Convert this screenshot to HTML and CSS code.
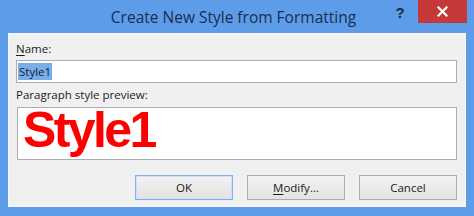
FILE: index.html
```html
<!DOCTYPE html>
<html lang="en">
<head>
    <meta charset="UTF-8">
    <title>Create New Style from Formatting</title>
    <link rel="stylesheet" href="styles.css">
</head>
<body>
    <div class="window">
        <!-- Title bar -->
        <div class="titlebar">
            <div></div>
            <div class="title">Create New Style from Formatting</div>
            <div class="controls">
                <span class="help-btn">?</span>
                <span class="close-btn">
                    <svg width="11" height="11" viewBox="0 0 11 11">
                        <path d="M1.5 1.5 L9.5 9.5 M9.5 1.5 L1.5 9.5" stroke="#fff" stroke-width="2.2" stroke-linecap="square"/>
                    </svg>
                </span>
            </div>
        </div>

        <!-- Dialog body -->
        <div class="panel">
            <label class="field-label" for="styleName"><u>N</u>ame:</label>
            <div class="text-input" id="styleName"><span class="selected">Style1</span></div>

            <div class="field-label preview-label">Paragraph style preview:</div>
            <div class="preview-box">
                <span class="preview-text">Style1</span>
            </div>

            <div class="button-row">
                <button class="btn btn-default">OK</button>
                <button class="btn"><u>M</u>odify...</button>
                <button class="btn">Cancel</button>
            </div>
        </div>
    </div>
</body>
</html>
```

FILE: styles.css
```css
* {
    margin: 0;
    padding: 0;
    box-sizing: border-box;
}

:root {
    --frame-color: #5d9ce8;
    --panel-color: #f0f0f0;
    --text-color: #1b1b1b;
    --title-color: #1b2e4e;
    --close-color: #c6393b;
}

body {
    background: var(--frame-color);
    font-family: 'Open Sans', 'Noto Sans', sans-serif;
    font-size: 11.5px;
    color: var(--text-color);
}

.window {
    width: 474px;
    height: 216px;
    display: flex;
    flex-direction: column;
    background: var(--frame-color);
}

.titlebar {
    height: 33px;
    display: grid;
    grid-template-columns: 1fr auto 1fr;
    padding-right: 7px;
}

.title {
    align-self: center;
    font-size: 15.5px;
    color: var(--title-color);
    padding-top: 1px;
    white-space: nowrap;
}

.controls {
    display: flex;
    justify-content: flex-end;
    align-items: flex-start;
}

.help-btn {
    width: 28px;
    height: 23px;
    display: flex;
    align-items: center;
    justify-content: center;
    font-family: 'Liberation Sans', sans-serif;
    font-weight: bold;
    font-size: 15px;
    color: #1a2a44;
    margin-right: 4px;
    padding-top: 2px;
}

.close-btn {
    width: 49px;
    height: 23px;
    background: var(--close-color);
    display: flex;
    align-items: center;
    justify-content: center;
}

.panel {
    margin: 0 8px;
    height: 174px;
    background: var(--panel-color);
    border: 1px solid #f7f7f7;
    padding: 6px 8px 0 7px;
    display: flex;
    flex-direction: column;
}

.field-label {
    display: block;
    line-height: 16px;
    margin-top: 1px;
}

.text-input {
    margin-top: 3px;
    height: 23px;
    background: white;
    border: 1px solid #abadb3;
    padding: 2px 1px;
    line-height: 17px;
}

.selected {
    display: inline-block;
    background: #78ade8;
    color: #0d1d3a;
    padding: 0 1px;
    line-height: 17px;
}

.preview-label {
    margin-top: 4px;
}

.preview-box {
    margin-top: 4px;
    margin-left: 1px;
    height: 53px;
    background: white;
    border: 1px solid #abadb3;
    padding-left: 5px;
}

.preview-text {
    font-family: 'Liberation Sans', Arial, sans-serif;
    font-weight: bold;
    font-size: 50px;
    line-height: 44px;
    letter-spacing: -2.6px;
    color: #ff0000;
}

.button-row {
    margin-top: 15px;
    display: flex;
    justify-content: flex-end;
    gap: 14px;
}

.btn {
    width: 98px;
    height: 25px;
    font-family: inherit;
    font-size: 11.5px;
    color: var(--text-color);
    background: linear-gradient(#f2f2f2, #e3e3e3);
    border: 1px solid #adadad;
}

.btn-default {
    border-color: #7db2e8;
    box-shadow: inset 0 0 0 1px #cde2f7;
}

.btn u,
.field-label u {
    text-decoration: underline;
    text-underline-offset: 2px;
}
```
